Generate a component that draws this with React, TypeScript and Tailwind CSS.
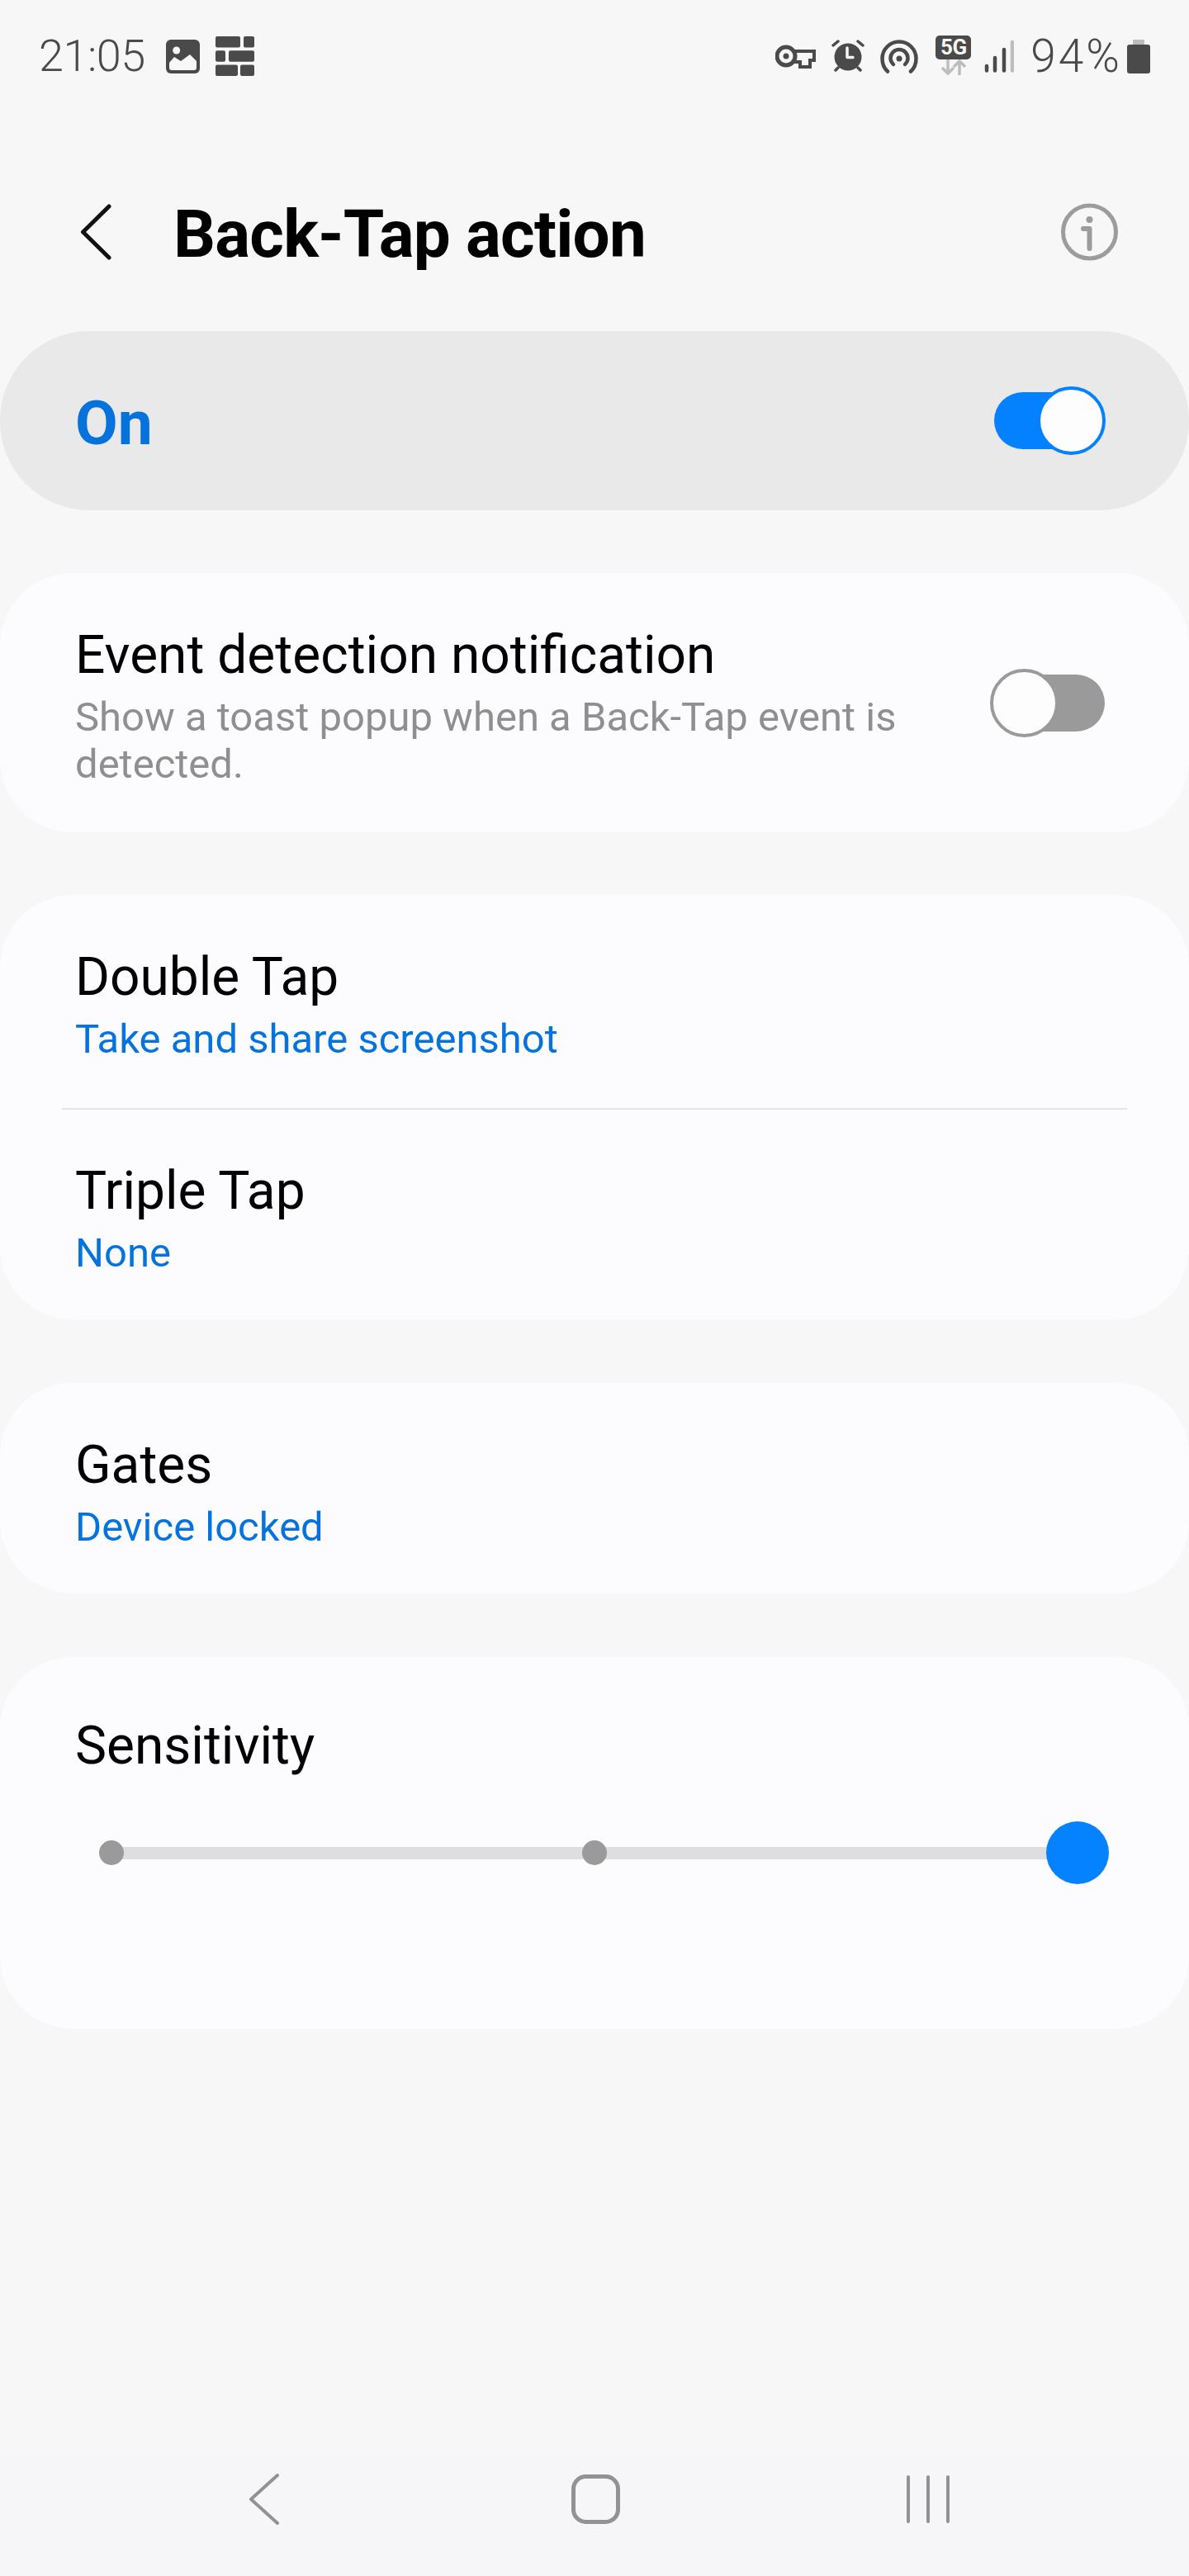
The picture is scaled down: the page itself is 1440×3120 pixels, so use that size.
import type { ReactNode } from "react";

const font = { fontFamily: "Roboto, sans-serif" };

const StatusLeft = () => (
  <div className="flex items-center">
    <span className="text-[54px] leading-none font-light text-[#4a4a4a] tracking-[-0.5px]">21:05</span>
    <svg className="ml-[25px]" width="41" height="41" viewBox="0 0 41 41">
      <rect width="41" height="41" rx="6" fill="#4a4a4a" />
      <circle cx="12.700" cy="13" r="4.500" fill="#f7f7f7" />
      <path d="M4 28l6-7 8 5 11-8 8 8v8a3 3 0 0 1-3 3H7a3 3 0 0 1-3-3z" fill="#f7f7f7" />
    </svg>
    <svg className="ml-[19px]" width="47" height="48" viewBox="0 0 47 48" fill="#4a4a4a">
      <rect width="30" height="13.500" rx="2" />
      <rect x="34" width="13" height="13.500" rx="2" />
      <rect y="17.300" width="12" height="13.500" rx="2" />
      <rect x="16" y="17.300" width="31" height="13.500" rx="2" />
      <rect y="34.500" width="27" height="13.500" rx="2" />
      <rect x="30" y="34.500" width="17" height="13.500" rx="2" />
    </svg>
  </div>
);

const StatusRight = () => (
  <div className="flex items-center">
    <svg width="49" height="30" viewBox="0 0 49 30" fill="none" stroke="#4a4a4a">
      <circle cx="13" cy="15" r="11" strokeWidth="5" />
      <circle cx="13" cy="15" r="3.500" fill="#4a4a4a" stroke="none" />
      <path d="M22 9h25v11h-5v8H30v-6h-9" strokeWidth="4" />
    </svg>
    <svg className="ml-[19px]" width="40" height="40" viewBox="0 0 40 40">
      <circle cx="20" cy="21" r="16.500" fill="#4a4a4a" />
      <path d="M19 10v11.500h7" fill="none" stroke="#f7f7f7" strokeWidth="3.500" strokeLinecap="round" strokeLinejoin="round" />
      <path d="M2 7l6-5M38 7l-6-5M5 37l3-3M35 37l-3-3" stroke="#4a4a4a" strokeWidth="3.500" strokeLinecap="round" />
    </svg>
    <svg className="ml-[19px]" width="46" height="41" viewBox="0 0 46 41" fill="none" stroke="#4a4a4a" strokeWidth="4.500" strokeLinecap="round">
      <path d="M9 38.500C4 34 2.500 29 2.500 23a20.500 20.500 0 0 1 41 0c0 6-1.500 11-6.500 15.500" />
      <path d="M16 30c-2-2-3.500-4.500-3.500-7.500a10.500 10.500 0 0 1 21 0c0 3-1.500 5.500-3.500 7.500" />
      <circle cx="23" cy="23" r="3.500" fill="#4a4a4a" stroke="none" />
    </svg>
    <div className="ml-[21px] flex flex-col items-center w-[43px] -mt-[2px]">
      <div className="w-[43px] h-[29px] rounded-[5px] bg-[#4a4a4a] text-[#f7f7f7] text-[26px] leading-[29px] font-bold text-center tracking-[-0.5px]">5G</div>
      <svg width="30" height="19" viewBox="0 0 30 19" fill="none" stroke="#bdbdbd" strokeWidth="3.500">
        <path d="M8 0v17M1 10l7 7 7-7M22 19V2M15 9l7-7 7 7" />
      </svg>
    </div>
    <svg className="ml-[16px]" width="36" height="40" viewBox="0 0 36 40" strokeWidth="4.500" strokeLinecap="round" fill="none">
      <path d="M3 37.500V32M13 37.500V22M24 37.500V12" stroke="#4a4a4a" />
      <path d="M34 37.500V3" stroke="#bdbdbd" />
    </svg>
    <span className="ml-[20px] text-[55px] leading-none font-light text-[#4a4a4a] tracking-[3px]">94%</span>
    <svg className="ml-[6px]" width="28" height="41" viewBox="0 0 28 41">
      <path d="M7 0h14v6H7z" fill="#bdbdbd" />
      <rect y="6" width="28" height="35" rx="3" fill="#4a4a4a" />
    </svg>
  </div>
);

const Toggle = ({ on }: { on: boolean }) =>
  on ? (
    <div className="relative w-[134px] h-[69px] rounded-full bg-[#0381fe]">
      <div className="absolute -right-[1px] -top-[7px] w-[83px] h-[83px] rounded-full bg-[#fdfdfd] border-[4px] border-[#0381fe]" />
    </div>
  ) : (
    <div className="relative w-[134px] h-[69px] rounded-full bg-[#9a9a9a]">
      <div className="absolute -left-[5px] -top-[7px] w-[83px] h-[83px] rounded-full bg-[#fdfdfd] border-[4px] border-[#9a9a9a]" />
    </div>
  );

const Row = ({ title, value }: { title: string; value: string }) => (
  <div className="pl-[91px]">
    <div className="text-[64px] leading-[72px] text-black">{title}</div>
    <div className="text-[49px] leading-[57px] text-[#0672dc] mt-[10px]">{value}</div>
  </div>
);

const Card = ({ className, children }: { className: string; children: ReactNode }) => (
  <div className={`bg-[#fcfcff] rounded-[88px] ${className}`}>{children}</div>
);

const Dot = () => (
  <div className="relative w-[76px] flex justify-center">
    <div className="w-[30px] h-[30px] rounded-full bg-[#9a9a9a]" />
  </div>
);

export default function App() {
  return (
    <div style={font} className="w-[1440px] h-[3120px] bg-[#f7f7f7] flex flex-col">
      <div className="h-[136px] pl-[47px] pr-[47px] flex items-center justify-between">
        <StatusLeft />
        <StatusRight />
      </div>

      <div className="h-[148px] mt-[71px] pl-[96px] pr-[86px] flex items-center">
        <svg width="40" height="68" viewBox="0 0 40 68" fill="none" stroke="#111" strokeWidth="5" strokeLinecap="round" strokeLinejoin="round">
          <path d="M36 3L4.500 34 36 65" />
        </svg>
        <h1 className="ml-[74px] mt-[5px] text-[80px] leading-none font-bold text-black tracking-[-0.8px]">Back-Tap action</h1>
        <svg className="ml-auto" width="69" height="70" viewBox="0 0 69 70" fill="none" stroke="#9c9c9c">
          <circle cx="34.500" cy="35" r="32" strokeWidth="5" />
          <circle cx="34.500" cy="20" r="4" fill="#9c9c9c" stroke="none" />
          <path d="M27 31h7.500v24" strokeWidth="6" strokeLinecap="round" strokeLinejoin="round" />
        </svg>
      </div>

      <div className="mt-[46px] h-[217px] rounded-[108px] bg-[#e9e9e9] pl-[91px] pr-[102px] flex items-center justify-between">
        <span className="mt-[6px] text-[75px] font-bold text-[#0672dc] leading-none">On</span>
        <Toggle on />
      </div>

      <Card className="mt-[76px] h-[314px] pl-[91px] pr-[102px] flex items-start justify-between">
        <div className="pt-[64px] w-[1040px]">
          <div className="text-[64px] leading-[72px] text-black">Event detection notification</div>
          <div className="text-[49px] leading-[57px] text-[#8f8f8f] mt-[10px]">
            Show a toast popup when a Back-Tap event is detected.
          </div>
        </div>
        <div className="mt-[123px]"><Toggle on={false} /></div>
      </Card>

      <Card className="mt-[76px] h-[514px]">
        <div className="h-[258px] pt-[64px]">
          <Row title="Double Tap" value="Take and share screenshot" />
        </div>
        <div className="h-[2px] mx-[75px] bg-[#e4e4e6]" />
        <div className="pt-[63px]">
          <Row title="Triple Tap" value="None" />
        </div>
      </Card>

      <Card className="mt-[77px] h-[255px] pt-[64px]">
        <Row title="Gates" value="Device locked" />
      </Card>

      <Card className="mt-[77px] h-[450px] pt-[72px]">
        <div className="pl-[91px] text-[64px] leading-[72px] text-black">Sensitivity</div>
        <div className="relative mt-[55px] mx-[97px] h-[76px] flex items-center justify-between">
          <div className="absolute left-[38px] right-[38px] h-[15px] bg-[#dedee0]" />
          <Dot />
          <Dot />
          <div className="relative w-[76px] h-[76px] rounded-full bg-[#0582ff]" />
        </div>
      </Card>

      <div className="mt-auto h-[144px] pb-[42px] pl-[300px] flex items-center bg-[#f6f6f9]">
        <svg width="38" height="64" viewBox="0 0 38 64" fill="none" stroke="#929292" strokeWidth="4" strokeLinecap="round" strokeLinejoin="round">
          <path d="M36 3L4 32l32 29" />
        </svg>
        <svg className="ml-[354px]" width="59" height="60" viewBox="0 0 59 60" fill="none" stroke="#929292" strokeWidth="5">
          <rect x="2.500" y="2.500" width="54" height="55" rx="15" />
        </svg>
        <svg className="ml-[346px]" width="54" height="60" viewBox="0 0 54 60" fill="none" stroke="#929292" strokeWidth="4" strokeLinecap="round">
          <path d="M3 3v54M27 3v54M51 3v54" />
        </svg>
      </div>
    </div>
  );
}
